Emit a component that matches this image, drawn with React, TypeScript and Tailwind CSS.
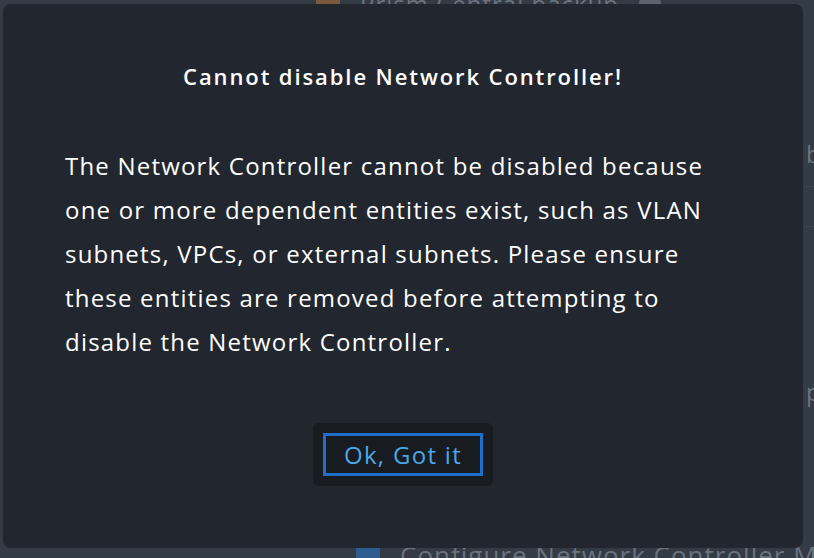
import React from "react";

export default function App() {
  return (
    <div
      className="relative w-[814px] h-[558px] overflow-hidden bg-[#333b45]"
      style={{ fontFamily: "'Open Sans', 'Noto Sans', sans-serif" }}
    >
      {/* background page content (behind modal) */}
      <div className="absolute left-[316px] top-[-14px] flex items-center gap-[20px] text-[24px] text-[#6b737d] tracking-[1px]">
        <span className="w-[24px] h-[24px] rounded-[4px] bg-[#7a5a3c]" />
        <span>Prism Central backup</span>
        <span className="w-[22px] h-[22px] rounded-full bg-[#5b636d]" />
      </div>
      <div className="absolute left-[806px] top-[136px] text-[24px] text-[#6b737d]">b</div>
      <div className="absolute left-[806px] top-[186px] w-[10px] h-px bg-[#3d4550]" />
      <div className="absolute left-[806px] top-[226px] w-[10px] h-px bg-[#3d4550]" />
      <div className="absolute left-[806px] top-[374px] text-[24px] text-[#6b737d]">p</div>
      <div className="absolute left-[356px] top-[536px] flex items-center gap-[20px] text-[26px] text-[#6b737d] whitespace-nowrap tracking-[1px]">
        <span className="w-[24px] h-[24px] rounded-[5px] bg-[#2d5c8e]" />
        <span>Configure Network Controller Management</span>
      </div>

      {/* modal */}
      <div className="absolute left-[3px] top-[4px] w-[800px] h-[544px] rounded-[8px] bg-[#22272f] flex flex-col items-center">
        <h1 className="mt-[58px] text-[22px] font-semibold text-white leading-[28px] tracking-[1.9px]">
          Cannot disable Network Controller!
        </h1>
        <p className="self-start mt-[54px] ml-[62px] text-[24px] leading-[44px] text-white whitespace-nowrap tracking-[1.2px]">
          The Network Controller cannot be disabled because
          <br />
          one or more dependent entities exist, such as VLAN
          <br />
          subnets, VPCs, or external subnets. Please ensure
          <br />
          these entities are removed before attempting to
          <br />
          disable the Network Controller.
        </p>
        <div className="mt-[59px] p-[10px] rounded-[6px] bg-[#181b20]">
          <button className="w-[160px] h-[43px] border-[3px] border-[#1f6fc8] text-[24px] tracking-[1.3px] text-[#4aa8e8] bg-[#181b20] flex items-center justify-center">
            Ok, Got it
          </button>
        </div>
      </div>
    </div>
  );
}
